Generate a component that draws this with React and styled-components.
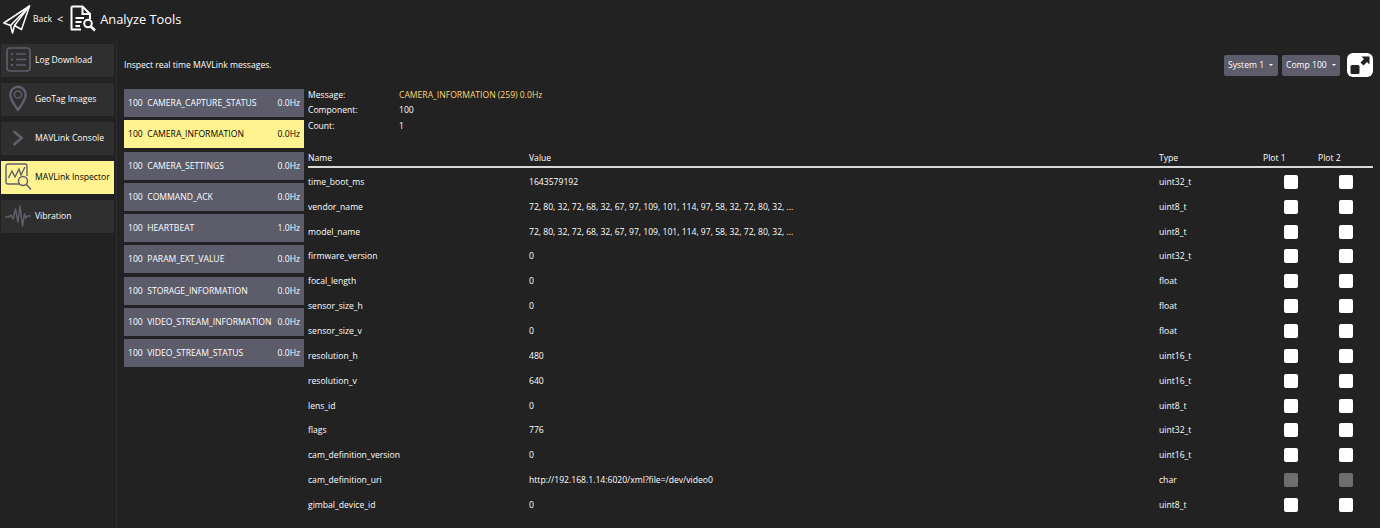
import React from "react";
import styled, { createGlobalStyle } from "styled-components";

const WHITE = "#ffffff";
const BG = "#222222";
const BUTTON = "#5c5c6b";
const YELLOW = "#fff291";
const TILE = "#2f2f2f";
const ICON = "#5f5f6d";

const MESSAGES = [
    ["CAMERA_CAPTURE_STATUS", "0.0Hz"],
    ["CAMERA_INFORMATION", "0.0Hz", true],
    ["CAMERA_SETTINGS", "0.0Hz"],
    ["COMMAND_ACK", "0.0Hz"],
    ["HEARTBEAT", "1.0Hz"],
    ["PARAM_EXT_VALUE", "0.0Hz"],
    ["STORAGE_INFORMATION", "0.0Hz"],
    ["VIDEO_STREAM_INFORMATION", "0.0Hz"],
    ["VIDEO_STREAM_STATUS", "0.0Hz"],
];

const FIELDS = [
    ["time_boot_ms", "1643579192", "uint32_t"],
    ["vendor_name", "72, 80, 32, 72, 68, 32, 67, 97, 109, 101, 114, 97, 58, 32, 72, 80, 32, ...", "uint8_t"],
    ["model_name", "72, 80, 32, 72, 68, 32, 67, 97, 109, 101, 114, 97, 58, 32, 72, 80, 32, ...", "uint8_t"],
    ["firmware_version", "0", "uint32_t"],
    ["focal_length", "0", "float"],
    ["sensor_size_h", "0", "float"],
    ["sensor_size_v", "0", "float"],
    ["resolution_h", "480", "uint16_t"],
    ["resolution_v", "640", "uint16_t"],
    ["lens_id", "0", "uint8_t"],
    ["flags", "776", "uint32_t"],
    ["cam_definition_version", "0", "uint16_t"],
    ["cam_definition_uri", "http://192.168.1.14:6020/xml?file=/dev/video0", "char", true],
    ["gimbal_device_id", "0", "uint8_t"],
];

const PlaneIcon = () => (
    <svg width="28" height="30" viewBox="0 0 28 30" fill="none" stroke={WHITE} strokeWidth="1.5" strokeLinejoin="round">
        <path d="M0.8 19 L26.5 2 L18.5 25.5 L11.5 21.5 L9.5 29 L7.5 21.5 Z" />
        <path d="M7.5 21.5 L26.5 2 L11.5 21.5" />
    </svg>
);

const DocIcon = () => (
    <svg width="27" height="27" viewBox="0 0 27 27" fill="none" stroke={WHITE} strokeWidth="2">
        <path d="M1.5 1.5 H12.5 L20 9 V14 M1.5 1.5 V24.5 H11" strokeLinejoin="round" />
        <path d="M12.5 1.5 V9 H20" />
        <path d="M5.5 13 H14 M5.5 17 H11.5 M5.5 21 H10" />
        <circle cx="18" cy="18.5" r="3.8" strokeWidth="2" />
        <path d="M20.8 21.5 L25 25.5" strokeWidth="2.6" />
    </svg>
);

const ListIcon = () => (
    <svg width="25" height="25" viewBox="0 0 25 25" fill="none" stroke={ICON} strokeWidth="1.6">
        <rect x="1" y="1" width="23" height="23" rx="3" />
        <path d="M10 7 H20 M10 12.5 H20 M10 18 H20" />
        <path d="M5 7 H7 M5 12.5 H7 M5 18 H7" strokeWidth="2" />
    </svg>
);

const PinIcon = () => (
    <svg width="18" height="27" viewBox="0 0 18 27" fill="none" stroke={ICON} strokeWidth="2.4">
        <path d="M9 25 C5.5 19.5 1.3 15 1.3 9.5 A7.7 7.7 0 0 1 16.7 9.5 C16.7 15 12.5 19.5 9 25 Z" strokeLinejoin="round" />
        <circle cx="9" cy="9.5" r="3.6" strokeWidth="1.5" />
    </svg>
);

const ChevronIcon = () => (
    <svg width="12" height="16" viewBox="0 0 12 16" fill="none" stroke={ICON} strokeWidth="2.8">
        <path d="M1.5 1 L9.5 8 L1.5 15" />
    </svg>
);

const ChartIcon = () => (
    <svg width="27" height="28" viewBox="0 0 27 28" fill="none" stroke={ICON} strokeWidth="1.4">
        <path d="M15 21 H3 Q1 21 1 19 V3 Q1 1 3 1 H20 Q22 1 22 3 V13" />
        <path d="M3.5 15 L7 8 L10 14 L14 6 L16 12 L20 4" />
        <circle cx="18" cy="18" r="4.5" strokeWidth="1.5" />
        <path d="M21.5 21.5 L26 26.5" strokeWidth="1.5" />
    </svg>
);

const WaveIcon = () => (
    <svg width="26" height="22" viewBox="0 0 26 22" fill="none" stroke={ICON} strokeWidth="1.5" strokeLinejoin="round">
        <path d="M0 12 H4 L6 10 L8 14 L10.5 4 L13 17 L15 1 L17.5 21 L19.5 9 L21 13 L22.5 11 H26" />
    </svg>
);

const PopoutIcon = () => (
    <svg width="26" height="24" viewBox="0 0 26 24">
        <rect x="0" y="0" width="26" height="24" rx="6" fill={WHITE} />
        <rect x="3.5" y="12" width="9" height="9" rx="1.5" fill="#222222" />
        <path d="M14.5 3.5 H22.5 V11.5 L20 9 L16.5 12.5 L13.5 9.5 L17 6 Z" fill="#222222" />
    </svg>
);

export default function App() {
    return (
        <>
            <GlobalStyle />
            <Page>
                <TopBar>
                    <PlaneIcon />
                    <BackText>Back</BackText>
                    <Chevron>&lt;</Chevron>
                    <DocIcon />
                    <Title>Analyze Tools</Title>
                </TopBar>
                <Body>
                    <Sidebar>
                        <Tile><IconSlot><ListIcon /></IconSlot>Log Download</Tile>
                        <Tile><IconSlot><PinIcon /></IconSlot>GeoTag Images</Tile>
                        <Tile><IconSlot><ChevronIcon /></IconSlot>MAVLink Console</Tile>
                        <Tile $active><IconSlot><ChartIcon /></IconSlot>MAVLink Inspector</Tile>
                        <Tile><IconSlot><WaveIcon /></IconSlot>Vibration</Tile>
                    </Sidebar>
                    <Main>
                        <Toolbar>
                            <span>Inspect real time MAVLink messages.</span>
                            <Controls>
                                <Select $width={54}>System 1<Caret /></Select>
                                <Select $width={58}>Comp 100<Caret /></Select>
                                <PopoutSlot><PopoutIcon /></PopoutSlot>
                            </Controls>
                        </Toolbar>
                        <Content>
                            <MessageList>
                                {MESSAGES.map(([name, rate, active]) => (
                                    <MessageButton key={name} $active={active}>
                                        <span>100</span>
                                        <MessageName>{name}</MessageName>
                                        <span>{rate}</span>
                                    </MessageButton>
                                ))}
                            </MessageList>
                            <Detail>
                                <Summary>
                                    <span>Message:</span>
                                    <SummaryTitle>CAMERA_INFORMATION (259) 0.0Hz</SummaryTitle>
                                    <span>Component:</span>
                                    <span>100</span>
                                    <span>Count:</span>
                                    <span>1</span>
                                </Summary>
                                <HeaderRow>
                                    <span>Name</span>
                                    <span>Value</span>
                                    <span>Type</span>
                                    <span>Plot 1</span>
                                    <span>Plot 2</span>
                                </HeaderRow>
                                {FIELDS.map(([name, value, type, disabled]) => (
                                    <FieldRow key={name}>
                                        <span>{name}</span>
                                        <span>{value}</span>
                                        <span>{type}</span>
                                        <Check $disabled={disabled} />
                                        <Check $disabled={disabled} />
                                    </FieldRow>
                                ))}
                            </Detail>
                        </Content>
                    </Main>
                </Body>
            </Page>
        </>
    );
}

const GlobalStyle = createGlobalStyle`
    html, body {
        margin: 0;
        padding: 0;
        background-color: ${BG};
    }
    * {
        box-sizing: border-box;
    }
`;

const Page = styled.div`
    width: 1380px;
    height: 528px;
    overflow: hidden;
    background-color: ${BG};
    color: ${WHITE};
    font-family: "Open Sans", sans-serif;
    font-size: 8.6px;
`;

const TopBar = styled.div`
    height: 41px;
    display: flex;
    align-items: center;
    padding: 0 0 4px 3px;
`;

const BackText = styled.span`
    margin-left: 2px;
    font-size: 8.6px;
`;

const Chevron = styled.span`
    margin: 0 7px 0 5px;
    font-size: 11px;
`;

const Title = styled.span`
    margin-left: 3px;
    font-size: 12.8px;
`;

const Body = styled.div`
    display: flex;
    height: 487px;
`;

const Sidebar = styled.div`
    width: 117px;
    padding: 3px 2px 0 1px;
    display: flex;
    flex-direction: column;
    gap: 6px;
    border-right: 1px solid #2c2c2c;
`;

const Tile = styled.div`
    height: 33px;
    padding-bottom: 2px;
    display: flex;
    align-items: center;
    background-color: ${(p) => (p.$active ? YELLOW : TILE)};
    color: ${(p) => (p.$active ? "#000000" : WHITE)};
    font-size: 8.6px;
`;

const IconSlot = styled.div`
    width: 34px;
    flex: none;
    display: flex;
    justify-content: center;
    align-items: center;
`;

const Main = styled.div`
    flex: 1;
    padding: 12px 7px 0 7px;
`;

const Toolbar = styled.div`
    height: 24px;
    display: flex;
    align-items: center;
    justify-content: space-between;
`;

const Controls = styled.div`
    display: flex;
    align-items: center;
    gap: 4px;
`;

const Select = styled.div`
    width: ${(p) => p.$width}px;
    height: 21px;
    padding-left: 4px;
    display: flex;
    align-items: center;
    gap: 5px;
    border-radius: 2px;
    background-color: ${BUTTON};
    font-size: 8.6px;
    white-space: nowrap;
`;

const Caret = styled.i`
    width: 0;
    height: 0;
    border-left: 2.5px solid transparent;
    border-right: 2.5px solid transparent;
    border-top: 2.5px solid ${WHITE};
`;

const PopoutSlot = styled.div`
    margin-left: 3px;
    display: flex;
`;

const Content = styled.div`
    margin-top: 10px;
    display: flex;
    gap: 4px;
`;

const MessageList = styled.div`
    width: 180px;
    margin-top: 2px;
    display: flex;
    flex-direction: column;
    gap: 3.25px;
`;

const MessageButton = styled.div`
    height: 28px;
    padding: 0 4px;
    display: flex;
    align-items: center;
    gap: 4.5px;
    background-color: ${(p) => (p.$active ? YELLOW : BUTTON)};
    color: ${(p) => (p.$active ? "#000000" : WHITE)};
    white-space: nowrap;
`;

const MessageName = styled.span`
    flex: 1;
`;

const Detail = styled.div`
    flex: 1;
`;

const Summary = styled.div`
    display: grid;
    grid-template-columns: 91px 1fr;
    grid-auto-rows: 15.5px;
    align-items: center;
`;

const SummaryTitle = styled.span`
    color: #ffd772;
`;

const COLUMNS = "221px 630px 104px 55px 55px";

const HeaderRow = styled.div`
    margin-top: 18px;
    margin-bottom: 2px;
    height: 16px;
    display: grid;
    grid-template-columns: ${COLUMNS};
    align-items: center;
    border-bottom: 2px solid #d8d8d8;
    padding-bottom: 1px;
`;

const FieldRow = styled.div`
    height: 24.85px;
    display: grid;
    grid-template-columns: ${COLUMNS};
    align-items: center;
`;

const Check = styled.div`
    width: 14px;
    height: 14px;
    margin-left: 21px;
    border-radius: 2px;
    background-color: ${(p) => (p.$disabled ? "#6e6e6e" : WHITE)};
`;
